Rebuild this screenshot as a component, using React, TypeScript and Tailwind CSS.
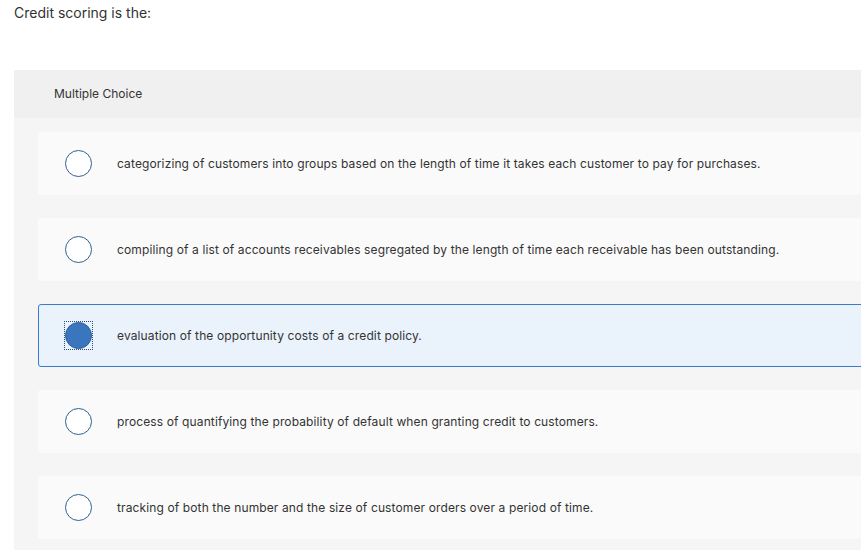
import React from 'react';

const options = [
  'categorizing of customers into groups based on the length of time it takes each customer to pay for purchases.',
  'compiling of a list of accounts receivables segregated by the length of time each receivable has been outstanding.',
  'evaluation of the opportunity costs of a credit policy.',
  'process of quantifying the probability of default when granting credit to customers.',
  'tracking of both the number and the size of customer orders over a period of time.',
];

const SELECTED = 2;

export default function App() {
  return (
    <div
      className="w-[861px] h-[550px] overflow-hidden bg-white text-[#333]"
      style={{ fontFamily: 'Inter, Arial, sans-serif' }}
    >
      <p className="pl-[14px] pt-[4px] text-[14px] leading-[18px] text-[#333]">Credit scoring is the:</p>

      <div className="ml-[14px] mt-[48px] w-[880px] bg-[#f5f5f5] pb-[30px]">
        <div className="h-[48px] bg-[#f0f0f0] pl-[40px] flex items-center text-[12px] text-[#333]">
          Multiple Choice
        </div>

        <div className="pl-[24px] pt-[14px] flex flex-col gap-[23px]">
          {options.map((text, i) => {
            const sel = i === SELECTED;
            return (
              <div
                key={i}
                className={
                  'h-[63px] flex items-center rounded-[3px] ' +
                  (sel ? 'bg-[#eaf2fb] border border-[#3a7bd0]' : 'bg-[#fafafa] border border-transparent')
                }
              >
                <div className="w-[78px] flex justify-center shrink-0">
                  {sel ? (
                    <div className="w-[29px] h-[29px] flex items-center justify-center border border-dotted border-[#2a4f7a]">
                      <div className="w-[27px] h-[27px] rounded-full bg-[#3a76bd] border border-[#2d5f97]" />
                    </div>
                  ) : (
                    <div className="w-[27px] h-[27px] rounded-full bg-white border-[1.5px] border-[#2f5f91]" />
                  )}
                </div>
                <span className="text-[12px] tracking-[0.12px] text-[#333] whitespace-nowrap">{text}</span>
              </div>
            );
          })}
        </div>
      </div>
    </div>
  );
}
